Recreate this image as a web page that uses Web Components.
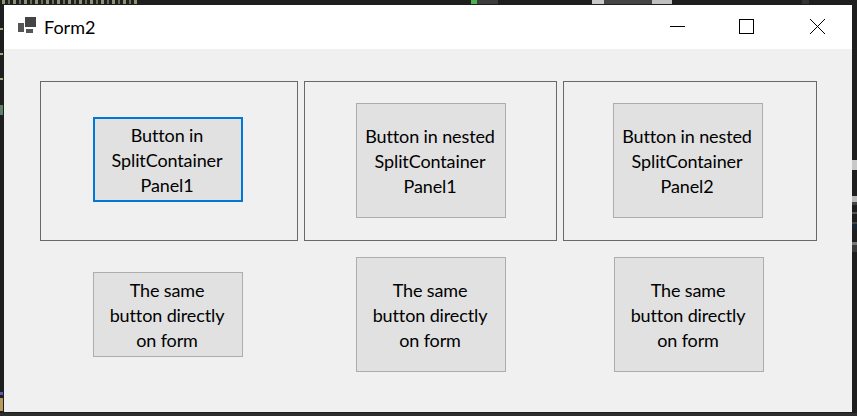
<!DOCTYPE html>
<html>
<head>
<meta charset="utf-8">
<title>Form2</title>
<style>
  html, body { margin: 0; height: 100%; background: #1e1e1e; overflow: hidden; }
  body { font-family: "Lato", "Open Sans", sans-serif; color: #000; }
</style>
</head>
<body>
<editor-backdrop></editor-backdrop>
<win-form caption="Form2">
  <split-panel>
    <win-button focused offset="53" vtop="36" vsize="85">Button in<br>SplitContainer<br>Panel1</win-button>
  </split-panel>
  <split-panel>
    <win-button offset="52" vtop="22" vsize="115">Button in nested<br>SplitContainer<br>Panel1</win-button>
  </split-panel>
  <split-panel>
    <win-button offset="50" vtop="22" vsize="115">Button in nested<br>SplitContainer<br>Panel2</win-button>
  </split-panel>
  <form-cell><win-button offset="53" vtop="15" vsize="85">The same<br>button directly<br>on form</win-button></form-cell>
  <form-cell><win-button offset="52" vtop="0" vsize="115">The same<br>button directly<br>on form</win-button></form-cell>
  <form-cell><win-button offset="51" vtop="0" vsize="115">The same<br>button directly<br>on form</win-button></form-cell>
</win-form>
<script>
// what shows of the editor behind the window
class EditorBackdrop extends HTMLElement {
  connectedCallback() {
    this.attachShadow({ mode: 'open' });
    const bits = [
      [471, 0, 6, 4, '#4caf50'], [477, 0, 21, 4, '#3c3c3c'],
      [592, 0, 12, 4, '#c8c8c8'], [604, 0, 48, 4, '#444'], [652, 0, 20, 4, '#c0c0c0'], [802, 0, 7, 4, '#333'],
      [0, 28, 3, 2, '#a8a880'], [0, 53, 3, 2, '#a8a880'], [0, 78, 3, 2, '#a8a880'], [0, 105, 3, 10, '#5f7f6a'],
      [0, 392, 3, 3, '#5a5ab0'], [0, 398, 3, 13, '#b89a5a'],
      [852, 160, 5, 10, '#c8c8c8'], [852, 196, 5, 6, '#bbb'], [852, 202, 5, 3, '#444'],
      [852, 212, 5, 2, '#555'], [852, 222, 5, 2, '#444'], [852, 224, 5, 6, '#1a2530'],
      [852, 242, 5, 3, '#777'], [852, 245, 5, 7, '#3a3a3a'],
      [0, 413, 857, 3, '#2d2d2d']
    ];
    this.shadowRoot.innerHTML = `
      <style>
        :host { position: absolute; inset: 0; display: block; overflow: hidden; }
        div { position: absolute; }
        .smudge { left: 2px; top: 0; width: 138px; height: 4px; background: repeating-linear-gradient(90deg, #8f8f72 0 3px, #1e1e1e 3px 6px, #6b6b58 6px 8px, #1e1e1e 8px 11px); }
      </style>
      <div class="smudge"></div>
      ${bits.map(b => `<div style="left:${b[0]}px;top:${b[1]}px;width:${b[2]}px;height:${b[3]}px;background:${b[4]}"></div>`).join('')}
    `;
  }
}
customElements.define('editor-backdrop', EditorBackdrop);

class WinForm extends HTMLElement {
  connectedCallback() {
    this.attachShadow({ mode: 'open' });
    this.shadowRoot.innerHTML = `
      <style>
        :host { position: relative; display: flex; flex-direction: column; width: 848px; height: 407px; margin: 5px 0 0 4px; background: #f0f0f0; }
        .titlebar { display: flex; align-items: center; height: 44px; background: #fff; flex: none; }
        .app-icon { width: 20px; height: 20px; margin-left: 12px; }
        .caption { margin-left: 8px; font-size: 18px; color: #000; }
        .controls { display: flex; margin-left: auto; height: 100%; }
        .controls svg { width: 71px; height: 44px; display: block; }
        .client { display: grid; grid-template-columns: 258px 253px 254px; grid-template-rows: 160px 115px; column-gap: 6px; row-gap: 16px; padding: 32px 0 0 36px; }
      </style>
      <div class="titlebar">
        <svg class="app-icon" viewBox="0 0 20 20">
          <rect x="9" y="0" width="11" height="10" fill="#444"/>
          <rect x="2" y="6" width="6" height="9" fill="#555"/>
          <rect x="10" y="12" width="7" height="4" fill="#555"/>
        </svg>
        <span class="caption">${this.getAttribute('caption')}</span>
        <div class="controls">
          <svg viewBox="0 0 71 44"><path d="M31 21.5H46" stroke="#000" fill="none"/></svg>
          <svg viewBox="0 0 71 44"><rect x="29.500" y="14.500" width="14" height="14" stroke="#000" fill="none"/></svg>
          <svg viewBox="0 0 71 44"><path d="M29 14L44 29M44 14L29 29" stroke="#000" fill="none"/></svg>
        </div>
      </div>
      <div class="client"><slot></slot></div>
    `;
  }
}
customElements.define('win-form', WinForm);

class SplitPanel extends HTMLElement {
  connectedCallback() {
    this.attachShadow({ mode: 'open' });
    this.shadowRoot.innerHTML = `
      <style>
        :host { display: flex; align-items: flex-start; box-sizing: border-box; border: 1px solid #696969; --inset: 1px; }
      </style>
      <slot></slot>
    `;
  }
}
customElements.define('split-panel', SplitPanel);

class FormCell extends HTMLElement {
  connectedCallback() {
    this.attachShadow({ mode: 'open' });
    this.shadowRoot.innerHTML = `
      <style>
        :host { display: flex; align-items: flex-start; --inset: 0px; }
      </style>
      <slot></slot>
    `;
  }
}
customElements.define('form-cell', FormCell);

class WinButton extends HTMLElement {
  connectedCallback() {
    this.attachShadow({ mode: 'open' });
    const focused = this.hasAttribute('focused');
    this.shadowRoot.innerHTML = `
      <style>
        :host { display: flex; align-items: center; justify-content: center; box-sizing: border-box; flex: none; width: 150px; padding: 1px 2px 0 0; background: #e1e1e1; text-align: center; font-size: 18px; letter-spacing: -0.12px; line-height: 25px; color: #000;
          border: ${focused ? '2px solid #0078d7' : '1px solid #adadad'};
          height: ${this.getAttribute('vsize')}px;
          margin-left: calc(${this.getAttribute('offset')}px - var(--inset));
          margin-top: calc(${this.getAttribute('vtop')}px - var(--inset)); }
      </style>
      <div><slot></slot></div>
    `;
  }
}
customElements.define('win-button', WinButton);
</script>
</body>
</html>
